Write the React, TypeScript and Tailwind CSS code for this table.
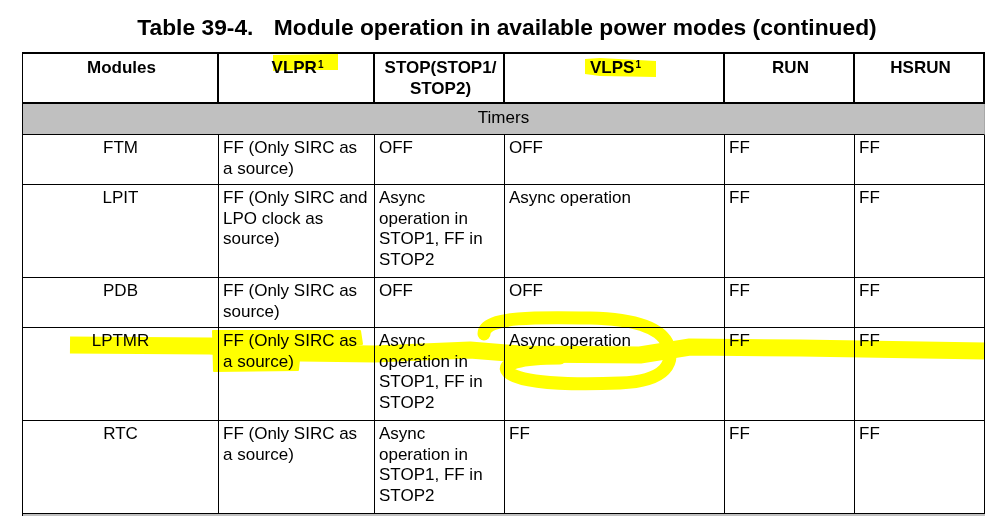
import React from "react";

const font = { fontFamily: '"Liberation Sans", Arial, Helvetica, sans-serif' };

const cols = "grid grid-cols-[196px_156px_130px_220px_130px_130px]";

type Row = { name: string; cells: string[][]; h: string };

const rows: Row[] = [
  {
    name: "FTM",
    h: "h-[50px]",
    cells: [["FF (Only SIRC as", "a source)"], ["OFF"], ["OFF"], ["FF"], ["FF"]],
  },
  {
    name: "LPIT",
    h: "h-[93px]",
    cells: [
      ["FF (Only SIRC and", "LPO clock as", "source)"],
      ["Async", "operation in", "STOP1, FF in", "STOP2"],
      ["Async operation"],
      ["FF"],
      ["FF"],
    ],
  },
  {
    name: "PDB",
    h: "h-[50px]",
    cells: [["FF (Only SIRC as", "source)"], ["OFF"], ["OFF"], ["FF"], ["FF"]],
  },
  {
    name: "LPTMR",
    h: "h-[93px]",
    cells: [
      ["FF (Only SIRC as", "a source)"],
      ["Async", "operation in", "STOP1, FF in", "STOP2"],
      ["Async operation"],
      ["FF"],
      ["FF"],
    ],
  },
  {
    name: "RTC",
    h: "h-[93px]",
    cells: [
      ["FF (Only SIRC as", "a source)"],
      ["Async", "operation in", "STOP1, FF in", "STOP2"],
      ["FF"],
      ["FF"],
      ["FF"],
    ],
  },
];

function HeaderCell({ lines, sup, first }: { lines: string[]; sup?: boolean; first?: boolean }) {
  return (
    <div
      className={
        "border-r-2 border-black text-center font-bold text-[17px] leading-[21px] pt-[3px] pl-[3px] text-black" +
        (first ? " border-l" : "")
      }
    >
      {lines.map((l, i) => (
        <div key={i}>
          {l}
          {sup && i === 0 ? (
            <span className="inline-block align-top text-[10px] leading-[10px] relative top-[3px] ml-px">1</span>
          ) : null}
        </div>
      ))}
    </div>
  );
}

export default function App() {
  return (
    <div className="relative w-[1008px] h-[516px] bg-white overflow-hidden text-black" style={font}>
      <div className="h-[52px] flex justify-center pt-[14px] pl-[6px]">
        <div className="font-bold text-[22.8px] leading-[26px] whitespace-nowrap">
          Table 39-4.<span className="pl-[14px]"> </span>Module operation in available power modes (continued)
        </div>
      </div>

      <div className="ml-[22px] w-[963px] border-l border-black">
        {/* header */}
        <div className={cols + " h-[52px] border-t-2 border-b-2 border-black"}>
          <HeaderCell lines={["Modules"]} />
          <HeaderCell lines={["VLPR"]} sup />
          <HeaderCell lines={["STOP(STOP1/", "STOP2)"]} />
          <HeaderCell lines={["VLPS"]} sup />
          <HeaderCell lines={["RUN"]} />
          <HeaderCell lines={["HSRUN"]} />
        </div>

        {/* group band */}
        <div className="h-[31px] bg-[#c0c0c0] border-b border-black flex items-center justify-center text-[17px] leading-[21px] pb-[3px] border-r border-r-[#a8a8a8]">
          Timers
        </div>

        {rows.map((r) => (
          <div key={r.name} className={cols + " " + r.h + " border-b border-black"}>
            <div className="border-r border-black text-center text-[17px] leading-[20.7px] pt-[3px]">{r.name}</div>
            {r.cells.map((c, i) => (
              <div key={i} className="border-r border-black text-[17px] leading-[20.7px] pt-[3px] pl-[4px]">
                {c.map((l, j) => (
                  <div key={j} className="whitespace-nowrap">
                    {l}
                  </div>
                ))}
              </div>
            ))}
          </div>
        ))}

        <div className="h-[31px] bg-[#c0c0c0]" />
      </div>

      {/* highlighter marks */}
      <svg
        className="absolute inset-0 pointer-events-none mix-blend-multiply"
        width={1008}
        height={516}
        viewBox="0 0 1008 516"
      >
        <polygon points="273,55 338,54 338,70 292,70 273,71" fill="#ffff00" />
        <polygon points="585,59 600,58 656,61 656,77 600,76 585,74" fill="#ffff00" />
        <path
          d="M213,331 L360,331 L362,344 L300,350 L298,370 L214,371 Z"
          fill="#ffff00"
          stroke="#ffff00"
          strokeWidth={2}
          strokeLinejoin="round"
        />
        <path
          d="M70,345 L210,346 L300,353 L375,354 L470,350 L520,354 L640,355 L690,347 L800,348 L985,351"
          fill="none"
          stroke="#ffff00"
          strokeWidth={17}
          strokeLinejoin="round"
          strokeLinecap="butt"
        />
        <path
          d="M484,334 C484,316 540,317 590,318 C640,319 662,330 668,345 C674,362 668,381 620,383 C570,385 520,383 508,372 C500,364 520,358 560,358"
          fill="none"
          stroke="#ffff00"
          strokeWidth={13}
          strokeLinecap="round"
          strokeLinejoin="round"
        />
      </svg>
    </div>
  );
}
